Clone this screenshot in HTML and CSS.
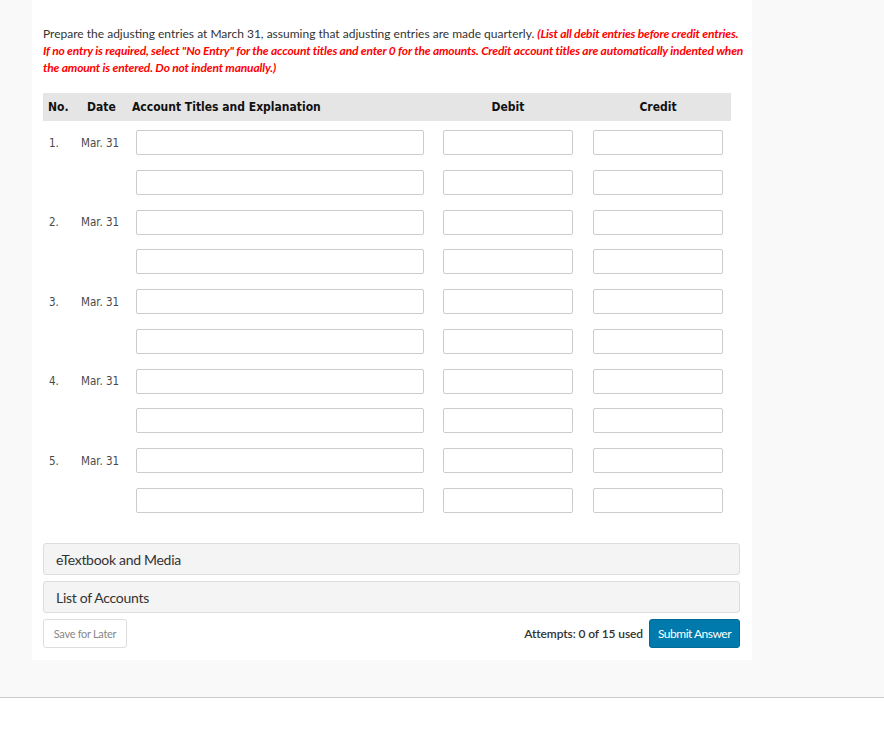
FILE: index.html
```html
<!DOCTYPE html>
<html>
<head>
<meta charset="utf-8">
<link rel="stylesheet" href="styles.css">
</head>
<body>
<div class="page">
  <div class="panel">
    <p class="intro">Prepare the adjusting entries at March 31, assuming that adjusting entries are made quarterly. <em class="warn">(List all debit entries before credit entries.<br>If no entry is required, select "No Entry" for the account titles and enter 0 for the amounts. Credit account titles are automatically indented when the amount is entered. Do not indent manually.)</em></p>

    <div class="thead">
      <span class="h-no">No.</span>
      <span class="h-date">Date</span>
      <span class="h-acct">Account Titles and Explanation</span>
      <span class="h-debit">Debit</span>
      <span class="h-credit">Credit</span>
    </div>

    <div class="entries">
      <div class="row">
        <span class="c-no">1.</span><span class="c-date">Mar. 31</span>
        <input class="f-acct" type="text"><input class="f-debit" type="text"><input class="f-credit" type="text">
      </div>
      <div class="row">
        <span class="c-no"></span><span class="c-date"></span>
        <input class="f-acct" type="text"><input class="f-debit" type="text"><input class="f-credit" type="text">
      </div>
      <div class="row">
        <span class="c-no">2.</span><span class="c-date">Mar. 31</span>
        <input class="f-acct" type="text"><input class="f-debit" type="text"><input class="f-credit" type="text">
      </div>
      <div class="row">
        <span class="c-no"></span><span class="c-date"></span>
        <input class="f-acct" type="text"><input class="f-debit" type="text"><input class="f-credit" type="text">
      </div>
      <div class="row">
        <span class="c-no">3.</span><span class="c-date">Mar. 31</span>
        <input class="f-acct" type="text"><input class="f-debit" type="text"><input class="f-credit" type="text">
      </div>
      <div class="row">
        <span class="c-no"></span><span class="c-date"></span>
        <input class="f-acct" type="text"><input class="f-debit" type="text"><input class="f-credit" type="text">
      </div>
      <div class="row">
        <span class="c-no">4.</span><span class="c-date">Mar. 31</span>
        <input class="f-acct" type="text"><input class="f-debit" type="text"><input class="f-credit" type="text">
      </div>
      <div class="row">
        <span class="c-no"></span><span class="c-date"></span>
        <input class="f-acct" type="text"><input class="f-debit" type="text"><input class="f-credit" type="text">
      </div>
      <div class="row">
        <span class="c-no">5.</span><span class="c-date">Mar. 31</span>
        <input class="f-acct" type="text"><input class="f-debit" type="text"><input class="f-credit" type="text">
      </div>
      <div class="row">
        <span class="c-no"></span><span class="c-date"></span>
        <input class="f-acct" type="text"><input class="f-debit" type="text"><input class="f-credit" type="text">
      </div>
    </div>

    <div class="bars">
      <div class="bar">eTextbook and Media</div>
      <div class="bar">List of Accounts</div>
    </div>

    <div class="actions">
      <button class="btn-save" type="button">Save for Later</button>
      <div class="right">
        <span class="attempts">Attempts: 0 of 15 used</span>
        <button class="btn-submit" type="button">Submit Answer</button>
      </div>
    </div>
  </div>
</div>
</body>
</html>
```

FILE: styles.css
```css
html, body {
  margin: 0;
  padding: 0;
}
body {
  background: #ffffff;
  font-family: Lato, "Open Sans", sans-serif;
  color: #333333;
}
.page {
  background: #f9f9f9;
  padding-bottom: 37px;
  border-bottom: 1px solid #cccccc;
}
.panel {
  margin-left: 32px;
  width: 697px;
  background: #ffffff;
  padding: 25px 12px 12px 11px;
}
.intro {
  margin: 0 0 17px 0;
  font-size: 12px;
  line-height: 17px;
  letter-spacing: 0;
  width: 708px;
}
.warn {
  color: #ff0000;
  font-weight: bold;
  font-style: italic;
  letter-spacing: -0.16px;
}
.thead {
  display: grid;
  grid-template-columns: 39px 50px 292px 19px 130px 20px 130px 8px;
  height: 28px;
  align-items: center;
  background: #e5e5e5;
  width: 688px;
  font-family: "DejaVu Sans Condensed", "DejaVu Sans", sans-serif;
  font-weight: bold;
  font-size: 12px;
  color: #111111;
}
.h-no { grid-column: 1; padding-left: 5px; }
.h-date { grid-column: 2; padding-left: 5px; }
.h-acct { grid-column: 3; }
.h-debit { grid-column: 5; text-align: center; }
.h-credit { grid-column: 7; text-align: center; }
.entries {
  display: flex;
  flex-direction: column;
  gap: 14.75px;
  padding-top: 9px;
  width: 688px;
}
.row {
  display: grid;
  grid-template-columns: 38px 55px 288px 149px 150px;
  align-items: center;
  height: 25px;
  font-family: "DejaVu Sans Condensed", "DejaVu Sans", sans-serif;
  font-size: 11.5px;
  color: #4a4a4a;
}
.c-no { padding-left: 6px; }
.row input {
  box-sizing: border-box;
  height: 25px;
  border: 1px solid #cccccc;
  border-radius: 2px;
  background: #ffffff;
  margin: 0;
  padding: 0 4px;
}
.f-acct { width: 288px; }
.row .f-debit { width: 130px; margin-left: 19px; }
.row .f-credit { width: 130px; margin-left: 20px; }
.bars {
  display: flex;
  flex-direction: column;
  gap: 6px;
  margin-top: 30.25px;
}
.bar {
  box-sizing: border-box;
  height: 32px;
  background: #f4f4f4;
  border: 1px solid #dddddd;
  border-radius: 3px;
  padding-left: 12px;
  display: flex;
  align-items: center;
  font-size: 14px;
  color: #333333;
  letter-spacing: -0.3px;
}
.actions {
  display: flex;
  justify-content: space-between;
  align-items: center;
  margin-top: 6px;
}
.right {
  display: flex;
  align-items: center;
  gap: 6px;
}
.btn-save {
  box-sizing: border-box;
  width: 84px;
  height: 29px;
  background: #ffffff;
  border: 1px solid #dddddd;
  border-radius: 3px;
  font-family: Lato, sans-serif;
  font-size: 11px;
  color: #888888;
  letter-spacing: -0.3px;
  padding: 0;
}
.attempts {
  font-size: 12px;
  font-weight: 600;
  color: #333333;
  letter-spacing: -0.1px;
}
.btn-submit {
  box-sizing: border-box;
  width: 91px;
  height: 29px;
  background: #0079ad;
  border: 1px solid #006a99;
  border-radius: 3px;
  color: #ffffff;
  font-family: Lato, sans-serif;
  font-size: 12px;
  letter-spacing: -0.5px;
  padding: 0;
}
```
